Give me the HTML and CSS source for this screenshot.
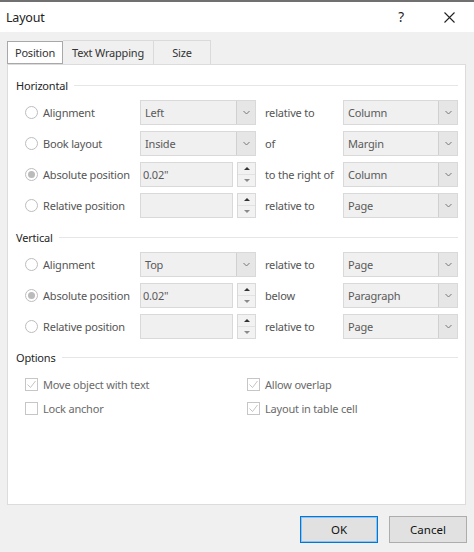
FILE: index.html
```html
<!DOCTYPE html>
<html lang="en">
<head>
<meta charset="UTF-8">
<meta name="viewport" content="width=device-width, initial-scale=1.0">
<title>Layout</title>
<link rel="stylesheet" href="styles.css">
</head>
<body>
  <div class="dialog">
    <!-- Window title bar -->
    <div class="titlebar">
      <span class="title">Layout</span>
      <span class="help">?</span>
      <span class="close">
        <svg width="11" height="11" viewBox="0 0 11 11"><path d="M0.5 0.5 L10.5 10.5 M10.5 0.5 L0.5 10.5" stroke="#222" stroke-width="1.1" fill="none"/></svg>
      </span>
    </div>

    <div class="content">
      <div class="tabs">
        <div class="tab active">Position</div>
        <div class="tab">Text Wrapping</div>
        <div class="tab">Size</div>
      </div>

      <div class="panel">
        <!-- Horizontal -->
        <div class="section-title">Horizontal</div>
        <div class="row">
          <label class="choice"><span class="radio"></span>Alignment</label>
          <div class="select left-field"><span class="value">Left</span><span class="drop"><svg width="7" height="5" viewBox="0 0 7 5"><path d="M0.5 1 L3.5 4 L6.5 1" stroke="#777" fill="none"/></svg></span></div>
          <span class="rel">relative to</span>
          <div class="select right-field"><span class="value">Column</span><span class="drop"><svg width="7" height="5" viewBox="0 0 7 5"><path d="M0.5 1 L3.5 4 L6.5 1" stroke="#777" fill="none"/></svg></span></div>
        </div>
        <div class="row">
          <label class="choice"><span class="radio"></span>Book layout</label>
          <div class="select left-field"><span class="value">Inside</span><span class="drop"><svg width="7" height="5" viewBox="0 0 7 5"><path d="M0.5 1 L3.5 4 L6.5 1" stroke="#777" fill="none"/></svg></span></div>
          <span class="rel">of</span>
          <div class="select right-field"><span class="value">Margin</span><span class="drop"><svg width="7" height="5" viewBox="0 0 7 5"><path d="M0.5 1 L3.5 4 L6.5 1" stroke="#777" fill="none"/></svg></span></div>
        </div>
        <div class="row">
          <label class="choice"><span class="radio checked"></span>Absolute position</label>
          <div class="spin left-field"><span class="spin-box">0.02"</span><span class="spin-btns"><span class="up"></span><span class="down"></span></span></div>
          <span class="rel">to the right of</span>
          <div class="select right-field"><span class="value">Column</span><span class="drop"><svg width="7" height="5" viewBox="0 0 7 5"><path d="M0.5 1 L3.5 4 L6.5 1" stroke="#777" fill="none"/></svg></span></div>
        </div>
        <div class="row">
          <label class="choice"><span class="radio"></span>Relative position</label>
          <div class="spin left-field"><span class="spin-box"></span><span class="spin-btns"><span class="up"></span><span class="down"></span></span></div>
          <span class="rel">relative to</span>
          <div class="select right-field"><span class="value">Page</span><span class="drop"><svg width="7" height="5" viewBox="0 0 7 5"><path d="M0.5 1 L3.5 4 L6.5 1" stroke="#777" fill="none"/></svg></span></div>
        </div>

        <!-- Vertical -->
        <div class="section-title gap-top">Vertical</div>
        <div class="row">
          <label class="choice"><span class="radio"></span>Alignment</label>
          <div class="select left-field"><span class="value">Top</span><span class="drop"><svg width="7" height="5" viewBox="0 0 7 5"><path d="M0.5 1 L3.5 4 L6.5 1" stroke="#777" fill="none"/></svg></span></div>
          <span class="rel">relative to</span>
          <div class="select right-field"><span class="value">Page</span><span class="drop"><svg width="7" height="5" viewBox="0 0 7 5"><path d="M0.5 1 L3.5 4 L6.5 1" stroke="#777" fill="none"/></svg></span></div>
        </div>
        <div class="row">
          <label class="choice"><span class="radio checked"></span>Absolute position</label>
          <div class="spin left-field"><span class="spin-box">0.02"</span><span class="spin-btns"><span class="up"></span><span class="down"></span></span></div>
          <span class="rel">below</span>
          <div class="select right-field"><span class="value">Paragraph</span><span class="drop"><svg width="7" height="5" viewBox="0 0 7 5"><path d="M0.5 1 L3.5 4 L6.5 1" stroke="#777" fill="none"/></svg></span></div>
        </div>
        <div class="row">
          <label class="choice"><span class="radio"></span>Relative position</label>
          <div class="spin left-field"><span class="spin-box"></span><span class="spin-btns"><span class="up"></span><span class="down"></span></span></div>
          <span class="rel">relative to</span>
          <div class="select right-field"><span class="value">Page</span><span class="drop"><svg width="7" height="5" viewBox="0 0 7 5"><path d="M0.5 1 L3.5 4 L6.5 1" stroke="#777" fill="none"/></svg></span></div>
        </div>

        <!-- Options -->
        <div class="section-title gap-top-small">Options</div>
        <div class="check-row first">
          <label class="check-item"><span class="checkbox"><svg width="11" height="11" viewBox="0 0 11 11"><path d="M1.5 5.5 L4.5 8.5 L9.5 2" stroke="#c4c4c4" stroke-width="1" fill="none"/></svg></span>Move object with text</label>
          <label class="check-item"><span class="checkbox"><svg width="11" height="11" viewBox="0 0 11 11"><path d="M1.5 5.5 L4.5 8.5 L9.5 2" stroke="#c4c4c4" stroke-width="1" fill="none"/></svg></span>Allow overlap</label>
        </div>
        <div class="check-row">
          <label class="check-item"><span class="checkbox"></span>Lock anchor</label>
          <label class="check-item"><span class="checkbox"><svg width="11" height="11" viewBox="0 0 11 11"><path d="M1.5 5.5 L4.5 8.5 L9.5 2" stroke="#c4c4c4" stroke-width="1" fill="none"/></svg></span>Layout in table cell</label>
        </div>
      </div>

      <div class="footer">
        <button class="btn default">OK</button>
        <button class="btn">Cancel</button>
      </div>
    </div>
  </div>
</body>
</html>
```

FILE: styles.css
```css
body {
  margin: 0;
  font-family: "Noto Sans", sans-serif;
  font-size: 11px;
  letter-spacing: -0.2px;
  color: #444444;
  background-color: #F0F0F0;
}

.dialog {
  width: 474px;
  height: 552px;
  box-sizing: border-box;
  border-top: 2px solid #707070;
  background-color: #F0F0F0;
}

/* Title bar */
.titlebar {
  height: 30px;
  background-color: #FFFFFF;
  display: flex;
  align-items: center;
  padding-left: 6px;
}

.title {
  flex: 1;
  font-size: 12.5px;
  color: #222222;
}

.help {
  font-size: 13.5px;
  color: #222222;
  margin-right: 40px;
}

.close {
  display: flex;
  margin-right: 19px;
}

.content {
  padding: 8px 0 0 7px;
}

/* Tabs */
.tabs {
  display: flex;
  align-items: flex-end;
  height: 24px;
}

.tab {
  box-sizing: border-box;
  height: 24px;
  border: 1px solid #DADADA;
  border-bottom: none;
  border-left: none;
  display: flex;
  align-items: center;
  justify-content: center;
  color: #333333;
  background-color: #F0F0F0;
}

.tab:nth-child(2) {
  width: 91px;
}

.tab:nth-child(3) {
  width: 57px;
}

.tab.active {
  width: 56px;
  height: 23px;
  border: 1px solid #A8A8A8;
  background-color: #FFFFFF;
}

/* Panel */
.panel {
  box-sizing: border-box;
  width: 459px;
  height: 441px;
  background-color: #FFFFFF;
  border: 1px solid #DCDCDC;
  padding: 12px 7px 0 8px;
}

.section-title {
  display: flex;
  align-items: center;
  height: 16px;
  color: #262626;
}

.section-title::after {
  content: "";
  flex: 1;
  border-top: 1px solid #E6E6E6;
  margin-left: 6px;
}

.section-title.gap-top {
  margin-top: 11px;
}

.section-title.gap-top-small {
  margin-top: 10px;
}

.row {
  display: flex;
  align-items: center;
  height: 25px;
  margin-top: 6px;
  padding-left: 9px;
}

.section-title + .row {
  margin-top: 7px;
}

.choice {
  width: 115px;
  display: flex;
  align-items: center;
  white-space: nowrap;
  color: #555555;
}

.radio {
  box-sizing: border-box;
  width: 13px;
  height: 13px;
  border: 1px solid #BDBDBD;
  border-radius: 50%;
  margin-right: 5px;
  display: flex;
  align-items: center;
  justify-content: center;
  flex: none;
}

.radio.checked::after {
  content: "";
  width: 7px;
  height: 7px;
  border-radius: 50%;
  background-color: #BBBBBB;
}

/* Drop-down and spin fields */
.select,
.spin {
  box-sizing: border-box;
  height: 25px;
  display: flex;
  color: #5A5A5A;
}

.left-field {
  width: 116px;
}

.right-field {
  width: 115px;
}

.select {
  border: 1px solid #D9D9D9;
  background-color: #F0F0F0;
}

.select .value {
  flex: 1;
  display: flex;
  align-items: center;
  padding-left: 4px;
}

.select .drop {
  width: 18px;
  display: flex;
  align-items: center;
  justify-content: center;
  background-color: #E6E6E6;
  border-left: 1px solid #D0D0D0;
}

.spin-box {
  box-sizing: border-box;
  width: 93px;
  height: 25px;
  border: 1px solid #D9D9D9;
  background-color: #F0F0F0;
  display: flex;
  align-items: center;
  padding-left: 2px;
}

.spin-btns {
  box-sizing: border-box;
  width: 19px;
  margin-left: 4px;
  border: 1px solid #D9D9D9;
  display: flex;
  flex-direction: column;
  background-color: #F2F2F2;
}

.spin-btns span {
  flex: 1;
  display: flex;
  align-items: center;
  justify-content: center;
}

.spin-btns .up {
  border-bottom: 1px solid #E2E2E2;
}

.spin-btns .up::after {
  content: "";
  border-left: 3px solid transparent;
  border-right: 3px solid transparent;
  border-bottom: 3px solid #333333;
}

.spin-btns .down::after {
  content: "";
  border-left: 3px solid transparent;
  border-right: 3px solid transparent;
  border-top: 3px solid #8A8A8A;
}

.rel {
  width: 78px;
  margin-left: 9px;
  white-space: nowrap;
  color: #555555;
}

/* Options */
.check-row {
  display: flex;
  height: 16px;
  margin-top: 8px;
  padding-left: 9px;
}

.check-row.first {
  margin-top: 11px;
}

.check-item {
  display: flex;
  align-items: center;
  color: #6A6A6A;
  white-space: nowrap;
}

.check-item:first-child {
  width: 222px;
}

.checkbox {
  box-sizing: border-box;
  width: 13px;
  height: 13px;
  border: 1px solid #C6C6C6;
  margin-right: 5px;
  display: flex;
  align-items: center;
  justify-content: center;
  flex: none;
}

/* Footer buttons */
.footer {
  display: flex;
  justify-content: flex-end;
  gap: 11px;
  padding: 11px 7px 0 0;
}

.btn {
  box-sizing: border-box;
  width: 78px;
  height: 27px;
  font-family: "Noto Sans", sans-serif;
  font-size: 11.5px;
  color: #111111;
  background-color: #E1E1E1;
  border: 1px solid #ADADAD;
  padding: 0;
}

.btn.default {
  border: 1px solid #0078D7;
  box-shadow: inset 0 0 0 1px #8FC3EE;
}
```
